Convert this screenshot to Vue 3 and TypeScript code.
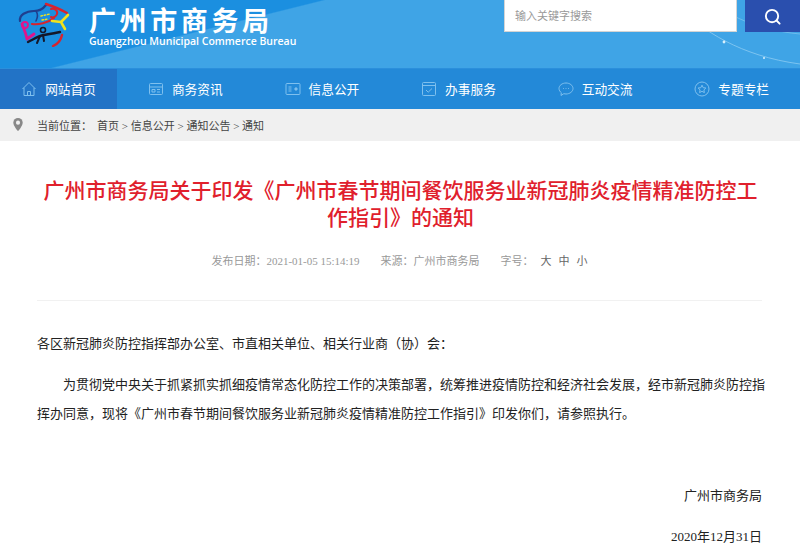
<script setup lang="ts">
const navItems = [
  { label: '网站首页', icon: 'home', active: true },
  { label: '商务资讯', icon: 'news', active: false },
  { label: '信息公开', icon: 'card', active: false },
  { label: '办事服务', icon: 'check', active: false },
  { label: '互动交流', icon: 'chat', active: false },
  { label: '专题专栏', icon: 'star', active: false },
];
</script>

<template>
  <div class="page">
    <header class="header">
      <svg class="logo" viewBox="0 0 56 46" width="56" height="46" fill="none" stroke-linecap="round" stroke-linejoin="round">
        <path d="M6 20C5 14 12 10 20 10c5 0 9-2 12-6" stroke="#1f3f8f" stroke-width="2.2" />
        <path d="M22 10c2 3 2 6 0 10" stroke="#1f3f8f" stroke-width="1.6" />
        <path d="M32 3c6 2 14 5 21 9" stroke="#d8232e" stroke-width="2.4" />
        <path d="M37 8c4-1 7 2 6 5-1 3-4 4-6 3" stroke="#d8232e" stroke-width="2" />
        <path d="M18 23c6 1 16-1 22-6" stroke="#d8232e" stroke-width="2.2" />
        <path d="M54 14l-7 7-9-1M47 21l4 7" stroke="#f2e21c" stroke-width="2.6" />
        <path d="M27 15l9-2M28 19l6-1" stroke="#f2e21c" stroke-width="1.4" stroke-dasharray="1.600 1.800" />
        <path d="M8 23c2 5 4 9 5 15l7-5" stroke="#e0148c" stroke-width="2.800" />
        <circle cx="11" cy="24" r="3" stroke="#e0148c" stroke-width="1.800" />
        <path d="M14 41c6-3 10-6 16-7 6-1 12-2 16-3" stroke="#14182a" stroke-width="2.400" />
        <circle cx="29" cy="29" r="2.500" stroke="#14182a" stroke-width="1.600" />
        <path d="M23 42l3-7M30 40l-1-6" stroke="#14182a" stroke-width="2" />
        <path d="M48 34c-1 5-4 9-9 11" stroke="#d8232e" stroke-width="2.400" />
      </svg>
      <div class="brand">
        <div class="brand__name">广州市商务局</div>
        <div class="brand__en">Guangzhou Municipal Commerce Bureau</div>
      </div>
      <div class="search">
        <div class="search__input">输入关键字搜索</div>
        <div class="search__btn">
          <svg viewBox="0 0 20 20" width="19" height="19" fill="none" stroke="#fff" stroke-width="2" stroke-linecap="round">
            <circle cx="9.500" cy="9.500" r="6.500" />
            <path d="M14.500 14.500l3 3" />
          </svg>
        </div>
      </div>
      <svg class="stars" viewBox="0 0 120 70" width="120" height="70" fill="none">
        <path d="M0 8C22 30 60 56 120 64" stroke="#8ccbf2" stroke-width="0.8" />
        <path d="M28 0c18 14 48 30 92 34" stroke="#8ccbf2" stroke-width="0.6" />
        <circle cx="44" cy="42" r="1.400" fill="#d8effc" />
        <circle cx="84" cy="58" r="1" fill="#d8effc" />
      </svg>
    </header>

    <nav class="nav">
      <a v-for="item in navItems" :key="item.label" class="nav__item" :class="{ 'nav__item--active': item.active }">
        <svg viewBox="0 0 16 16" width="16" height="16" fill="none" stroke="#7fc0ee" stroke-width="1" stroke-linejoin="round">
          <template v-if="item.icon === 'home'">
            <path d="M1.500 8L8 1.500 14.500 8M3 6.800V14.500h10V6.800" />
            <path d="M6.500 14.500v-4h3v4" />
          </template>
          <template v-else-if="item.icon === 'news'">
            <rect x="1.500" y="2.500" width="13" height="11" rx="1" />
            <path d="M1.500 6h13M4 8.500h3v2.500H4zM9 8.500h3M9 11h3" />
          </template>
          <template v-else-if="item.icon === 'card'">
            <rect x="1" y="2.500" width="14" height="11" rx="1" />
            <path d="M3.500 6h3M3.500 8h3M3.500 10h3" />
            <circle cx="11" cy="8" r="1.200" fill="#7fc0ee" />
          </template>
          <template v-else-if="item.icon === 'check'">
            <rect x="1.500" y="1.500" width="13" height="13" rx="1" />
            <path d="M1.500 4.500h13M5 9l2.200 2.200L11 7.500" />
          </template>
          <template v-else-if="item.icon === 'chat'">
            <path d="M8 2c3.800 0 7 2.400 7 5.500S11.800 13 8 13c-.8 0-1.500-.1-2.200-.3L3 14.500l.3-2.800C2 10.700 1 9.200 1 7.500 1 4.400 4.200 2 8 2z" />
            <path d="M5 7.500h.8M7.600 7.500h.8M10.200 7.500h.8" />
          </template>
          <template v-else>
            <circle cx="8" cy="8" r="7" />
            <path d="M8 4.200l1.200 2.500 2.700.3-2 1.900.5 2.700L8 10.300l-2.400 1.300.5-2.700-2-1.900 2.700-.3z" />
          </template>
        </svg>
        <span>{{ item.label }}</span>
      </a>
    </nav>

    <div class="crumb">
      <svg viewBox="0 0 12 16" width="12" height="15" fill="none">
        <path d="M6 1a5 5 0 0 0-5 5c0 3.500 5 9 5 9s5-5.500 5-9a5 5 0 0 0-5-5z" fill="#888" />
        <circle cx="6" cy="6" r="2.200" fill="#f0f0f0" />
      </svg>
      <span class="crumb__label">当前位置：</span>
      <span>首页 &gt; 信息公开 &gt; 通知公告 &gt; 通知</span>
    </div>

    <main class="article">
      <h1 class="article__title">广州市商务局关于印发《广州市春节期间餐饮服务业新冠肺炎疫情精准防控工作指引》的通知</h1>
      <div class="meta">
        <span>发布日期：2021-01-05 15:14:19</span>
        <span>来源：广州市商务局</span>
        <span class="meta__size">字号：<b>大</b><b>中</b><b>小</b></span>
      </div>
      <div class="article__body">
        <p class="to">各区新冠肺炎防控指挥部办公室、市直相关单位、相关行业商（协）会：</p>
        <p class="para">为贯彻党中央关于抓紧抓实抓细疫情常态化防控工作的决策部署，统筹推进疫情防控和经济社会发展，经市新冠肺炎防控指挥办同意，现将《广州市春节期间餐饮服务业新冠肺炎疫情精准防控工作指引》印发你们，请参照执行。</p>
        <p class="sign">广州市商务局</p>
        <p class="date">2020年12月31日</p>
      </div>
    </main>
  </div>
</template>

<style scoped>
.page {
  width: 800px;
  height: 552px;
  overflow: hidden;
  background: #fff;
  font-family: "Liberation Serif", "Noto Sans CJK SC", serif;
}

.header {
  position: relative;
  height: 69px;
  box-sizing: border-box;
  display: flex;
  align-items: flex-start;
  padding-left: 14px;
  background:
    linear-gradient(166deg, #1b8fe0 0, #1b8fe0 30%, transparent 30.5%),
    #3fa4e6;
  border-bottom: 1px solid #2b8fdc;
}

.logo {
  margin-top: 1px;
}

.brand {
  margin-left: 19px;
  color: #fff;
  font-family: "Open Sans", "Noto Sans CJK SC", sans-serif;
}

.brand__name {
  font-family: "Noto Sans CJK SC", sans-serif;
  font-size: 27px;
  line-height: 39px;
  font-weight: 700;
  letter-spacing: 3.600px;
  white-space: nowrap;
}

.brand__en {
  font-size: 10.500px;
  line-height: 15px;
  font-weight: 600;
  white-space: nowrap;
  margin-top: -5px;
}

.search {
  position: absolute;
  z-index: 1;
  top: 0;
  left: 504px;
  display: flex;
  gap: 8px;
}

.search__input {
  box-sizing: border-box;
  width: 233px;
  height: 32px;
  padding-left: 10px;
  background: #fff;
  border: 1px solid #d4d4d4;
  border-top: 0;
  color: #999;
  font-family: "Noto Sans CJK SC", sans-serif;
  font-size: 11px;
  line-height: 30px;
}

.search__btn {
  width: 55px;
  height: 32px;
  display: flex;
  align-items: center;
  justify-content: center;
  background: #2a4fae;
}

.stars {
  position: absolute;
  top: 0;
  right: 0;
}

.nav {
  height: 40px;
  display: flex;
  background: #2389d8;
  font-family: "Noto Sans CJK SC", sans-serif;
}

.nav__item {
  flex: 1;
  display: flex;
  align-items: center;
  justify-content: center;
  gap: 8px;
  color: #fff;
  font-size: 12.700px;
  line-height: 40px;
}

.nav__item--active {
  flex: 0 0 117px;
  background: #2273c6;
}

.crumb {
  height: 31px;
  padding-bottom: 1px;
  display: flex;
  align-items: center;
  padding-left: 12px;
  background: #f0f0f0;
  color: #444;
  font-family: "Liberation Serif", "Noto Sans CJK SC", sans-serif;
  font-size: 11px;
}

.crumb__label {
  margin: 0 5px 0 13px;
}

.article {
  padding: 0 38px 0 37px;
}

.article__title {
  margin: 35px -5px 0 -3px;
  color: #e0202c;
  font-family: "Noto Sans CJK SC", sans-serif;
  font-size: 21px;
  line-height: 27px;
  font-weight: 500;
  text-align: center;
}

.meta {
  margin-top: 23px;
  padding-bottom: 31px;
  border-bottom: 1px solid #f1f1f1;
  display: flex;
  justify-content: center;
  gap: 21px;
  color: #999;
  font-size: 11px;
  line-height: 16px;
}

.meta__size b {
  margin-left: 7px;
  color: #666;
  font-weight: 400;
}

.article__body {
  margin-right: -4px;
  color: #222;
  font-size: 13px;
  line-height: 29px;
}

.article__body p {
  margin: 0;
}

.to {
  margin-top: 28px !important;
}

.para {
  margin-top: 12px !important;
  text-indent: 2em;
}

.sign,
.date {
  text-align: right;
  padding-right: 4px;
}

.sign {
  margin-top: 53px !important;
}

.date {
  margin-top: 12px !important;
}
</style>
